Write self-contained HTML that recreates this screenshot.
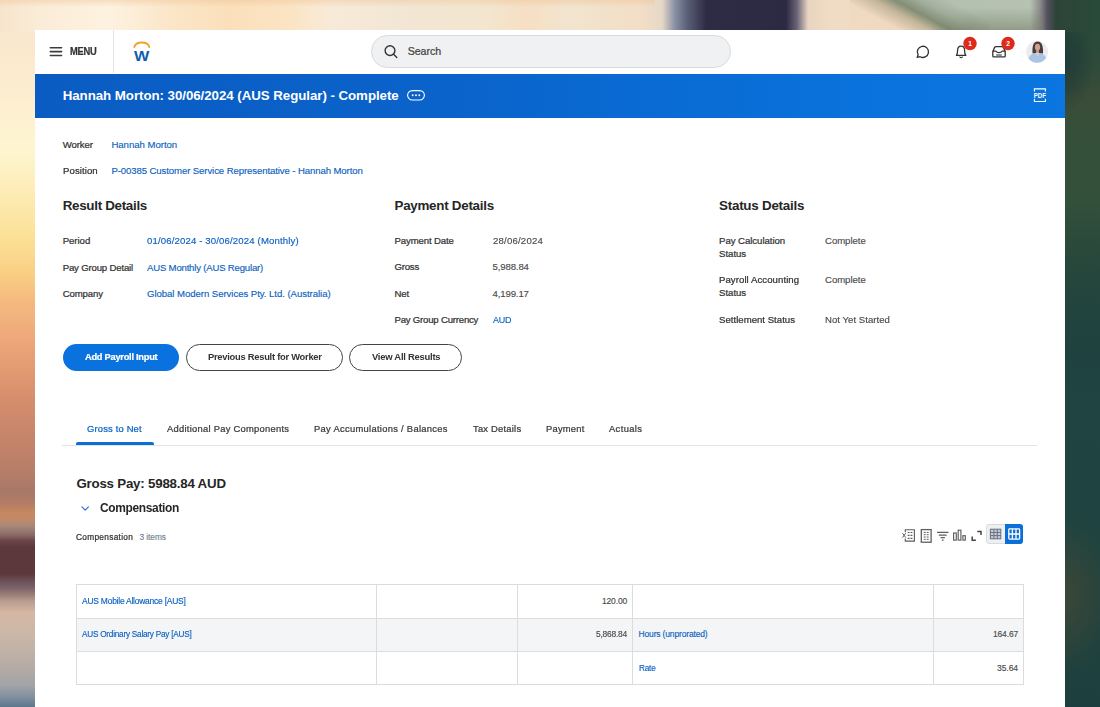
<!DOCTYPE html>
<html lang="en">
<head>
<meta charset="utf-8">
<title>Hannah Morton: 30/06/2024 (AUS Regular) - Complete</title>
<style>
html,body{margin:0;padding:0;}
body{width:1100px;height:707px;overflow:hidden;position:relative;background:#f6e4cc;font-family:"Liberation Sans",Arial,sans-serif;}
.abs{position:absolute;}
.t{position:absolute;white-space:nowrap;line-height:1;}
/* background photo approximation */
#bgleft{left:0;top:0;width:40px;height:707px;background:linear-gradient(to bottom,
 #f8e3cc 0px,#fdeed0 100px,#fef5d0 150px,#fdeab0 200px,#fbdf95 240px,#f9d084 272px,#f5bc80 298px,#efa97a 335px,#e49c72 365px,#d48e6c 400px,#c4846a 440px,#b87e68 470px,#a87868 490px,#b27c66 503px,#c8885e 513px,#c08a68 519px,#a88878 526px,#8a6a68 535px,#6a4448 541px,#5c383c 547px,#5c383c 574px,#6c5058 581px,#7a6468 588px,#9a8078 595px,#b89c90 601px,#d6b6a2 612px,#ccb8a8 630px,#c2b2a6 650px,#b4aaa4 668px,#a2a4a8 685px,#8090a0 697px,#5e768a 707px);}
#bgtop{left:0;top:0;width:1100px;height:32px;background:linear-gradient(to bottom,rgba(238,196,150,0.45) 0px,rgba(238,196,150,0) 7px) 0 0/655px 8px no-repeat,linear-gradient(to right,
 #f7e4cc 0px,#fbecd8 40px,#fdf2e0 110px,#fbe6c8 170px,#fbdfba 230px,#fbe4c4 290px,#f8ead8 330px,#f2e6d4 400px,#f3e6d0 480px,#f6dfc4 525px,#f1e4ce 570px,#f3dec6 640px,#e6d8c8 662px,#8890a4 675px,#5a6078 687px,#2e2c44 706px,#2c2a42 786px,#6a6478 797px,#e8d4c0 808px,#f0dcc4 830px,#f0dac2 880px,#b4c0b0 960px,#b6c2b2 1030px,#8c8c8c 1040px,#565260 1047px,#2c4438 1056px,#2a4a38 1100px);}
#bgdiag{left:850px;top:0;width:140px;height:34px;background:linear-gradient(28deg,#f0dac2 0%,#efd9c0 28%,#c4b69a 43%,#848e76 53%,#a4b09e 66%,#b4c0b0 80%,#b4c0b0 100%);}
#bgshade{left:930px;top:0;width:112px;height:34px;background:linear-gradient(to bottom,rgba(110,120,96,0) 8px,rgba(110,120,96,0.5) 30px);-webkit-mask-image:linear-gradient(to right,transparent 0,#000 40px,#000 100%);mask-image:linear-gradient(to right,transparent 0,#000 40px,#000 100%);}
#bgright{left:1060px;top:0;width:40px;height:707px;background:radial-gradient(ellipse 52px 80px at 2px 596px,rgba(66,72,54,0.85) 0%,rgba(62,72,54,0.45) 50%,rgba(60,72,56,0) 100%),radial-gradient(ellipse 32px 52px at 3px 60px,rgba(28,56,54,0.85) 0%,rgba(28,56,54,0.5) 50%,rgba(28,56,54,0) 100%),linear-gradient(to bottom,
 #2a4a38 0px,#2c4a3a 50px,#3a4c38 100px,#35503a 140px,#33503a 200px,#2c4a3a 240px,#26463c 270px,#22443e 310px,#1f4240 350px,#1f4442 400px,#1f4340 520px,#21423e 600px,#1e403e 680px,#1c3e3e 707px);}
#panel{left:35px;top:30px;width:1030px;height:677px;background:#fff;}
#banner{left:35px;top:73.5px;width:1030px;height:44.2px;background:linear-gradient(to right,#0a5cc2 0%,#0a63cb 40%,#0a72dc 80%,#0b75e0 100%);}
#vdiv{left:113px;top:30px;width:1px;height:43px;background:#e4e4e8;}
#search{left:370.5px;top:35.3px;width:360.6px;height:32.6px;box-sizing:border-box;border:1px solid #dadadc;border-radius:16.3px;background:#f0f1f2;}
.btn{box-sizing:border-box;height:27.5px;border-radius:14px;top:343.5px;}
#b1{left:62.5px;width:116.5px;background:#0a72de;}
#b2{left:185.6px;width:157px;border:1px solid #444;background:#fff;}
#b3{left:349.2px;width:113px;border:1px solid #444;background:#fff;}
#tabline{left:62px;top:445px;width:975px;height:1px;background:#e4e4e4;}
#tabul{left:76px;top:442px;width:77.7px;height:3px;background:#0b6fd8;border-radius:2px 2px 0 0;}
/* table */
#tbl{left:76px;top:584px;width:947.5px;height:101px;box-sizing:border-box;border:1px solid #dcdcdc;background:#fff;}
#row2{left:77px;top:618px;width:945.5px;height:33px;background:#f4f5f7;}
.hl{left:76px;width:947.5px;height:1px;background:#dcdcdc;}
.vl{top:584px;width:1px;height:101px;background:#dcdcdc;}
#tog{left:986px;top:524.3px;width:37.4px;height:19.3px;border-radius:3px;background:#eef0f2;box-sizing:border-box;border:1px solid #d8dadd;}
#togb{left:1005.2px;top:524.3px;width:18.2px;height:19.3px;border-radius:0 3px 3px 0;background:#0b6fd8;}
</style>
</head>
<body>
<div id="bgleft" class="abs"></div>
<div id="bgright" class="abs"></div>
<div id="bgtop" class="abs"></div>
<div id="bgdiag" class="abs"></div>
<div id="bgshade" class="abs"></div>
<div id="panel" class="abs"></div>
<div id="banner" class="abs"></div>
<div id="vdiv" class="abs"></div>
<div id="search" class="abs"></div>
<div id="b1" class="abs btn"></div>
<div id="b2" class="abs btn"></div>
<div id="b3" class="abs btn"></div>
<div id="tabline" class="abs"></div>
<div id="tabul" class="abs"></div>
<div id="tbl" class="abs"></div>
<div id="row2" class="abs"></div>
<div class="abs hl" style="top:617.5px"></div>
<div class="abs hl" style="top:651px"></div>
<div class="abs vl" style="left:376px"></div>
<div class="abs vl" style="left:517px"></div>
<div class="abs vl" style="left:632.3px"></div>
<div class="abs vl" style="left:933.4px"></div>
<div id="tog" class="abs"></div>
<div id="togb" class="abs"></div>

<svg class="abs" style="left:0;top:0" width="1100" height="707" viewBox="0 0 1100 707" fill="none">
 <!-- hamburger -->
 <g stroke="#3c3c3c" stroke-width="1.55" stroke-linecap="round">
  <path d="M50.3 47.7H61.6M50.3 51.6H61.6M50.3 55.5H61.6"/>
 </g>
 <!-- logo -->
 <path d="M134.3 47 C135.9 41.1 147.7 41.1 149.3 47" stroke="#f2a12a" stroke-width="1.9" stroke-linecap="round"/>
 <!-- search icon -->
 <circle cx="390" cy="50.6" r="4.9" stroke="#333" stroke-width="1.4"/>
 <path d="M393.6 54.2L396.8 57.4" stroke="#333" stroke-width="1.4" stroke-linecap="round"/>
 <!-- related actions pill -->
 <rect x="407.6" y="90.6" width="16.8" height="9.4" rx="4.7" stroke="#fff" stroke-width="1.1"/>
 <circle cx="412.7" cy="95.3" r="0.95" fill="#fff"/><circle cx="416" cy="95.3" r="0.95" fill="#fff"/><circle cx="419.3" cy="95.3" r="0.95" fill="#fff"/>
 <!-- chat -->
 <path d="M917.2 57.3 L918.1 54.7 A5.6 5.6 0 1 1 920.1 56.7 Z" stroke="#333" stroke-width="1.3" stroke-linejoin="round"/>
 <!-- bell -->
 <path d="M956.4 55.4 H965.8 C964.6 54.2 964.6 53 964.6 50.6 C964.6 47.8 963.2 46.2 961.1 46.2 C959 46.2 957.6 47.8 957.6 50.6 C957.6 53 957.6 54.2 956.4 55.4 Z" stroke="#333" stroke-width="1.3" stroke-linejoin="round"/>
 <path d="M959.6 56.6 A1.6 1.6 0 0 0 962.6 56.6" stroke="#333" stroke-width="1.2"/>
 <circle cx="970" cy="43.5" r="6.7" fill="#de2a1c"/>
 <!-- inbox -->
 <path d="M992.8 51.6 L994.6 47.4 Q995 46.6 996 46.6 H1002 Q1003 46.6 1003.4 47.4 L1005.2 51.6 V56 Q1005.2 56.9 1004.4 56.9 H993.6 Q992.8 56.9 992.8 56 Z" stroke="#333" stroke-width="1.3" stroke-linejoin="round"/>
 <path d="M992.8 51.1 H996 Q996.5 52.6 999 52.6 Q1001.5 52.6 1002 51.1 H1005.2" stroke="#333" stroke-width="1.1" stroke-linejoin="round"/>
 <path d="M996.2 55 H1001.8" stroke="#333" stroke-width="1.1"/>
 <circle cx="1008" cy="43.5" r="6.7" fill="#de2a1c"/>
 <!-- avatar -->
 <clipPath id="avc"><circle cx="1037.1" cy="51.8" r="10.9"/></clipPath>
 <g clip-path="url(#avc)">
  <rect x="1026" y="40" width="23" height="24" fill="#ececee"/>
  <path d="M1032.6 53.4 C1032.2 49 1032.2 41.6 1037.6 41.6 C1043 41.6 1043.2 49 1043 53.4 Z" fill="#4a3b3c"/>
  <ellipse cx="1037.5" cy="47.2" rx="2.6" ry="3.4" fill="#cda291"/>
  <path d="M1036.2 49.8 H1038.8 V53.4 H1036.2Z" fill="#c89c8a"/>
  <path d="M1027.6 63.5 C1027.8 55.5 1031.5 53 1037.4 53 C1043.3 53 1046.8 55.5 1047 63.5 Z" fill="#a9c4e4"/>
  <path d="M1035.6 52.8 L1037.5 56.4 L1039.4 52.8 Z" fill="#e4d0c8"/>
 </g>
 <!-- pdf icon -->
 <g stroke="#fff" stroke-width="1.1">
  <path d="M1034.4 91.6V88.9H1045.4V91.6M1034.4 98.8V101.5H1045.4V98.8"/>
 </g>
 <!-- chevron -->
 <path d="M82 506.9 L85.2 510.2 L88.4 506.9" stroke="#2a74d0" stroke-width="1.15" stroke-linecap="round" stroke-linejoin="round"/>
 <!-- toolbar icons -->
 <g stroke="#5e5e5e" stroke-width="1.15">
  <!-- excel -->
  <path d="M905.3 532.2V529.7H914.4V541.1H905.3V538.6"/>
  <path d="M907.7 532.5H912.5M907.7 535.4H912.5M907.7 538.3H912.5" stroke-dasharray="1.9 0.9"/>
  <path d="M902.5 533.2L905.7 537.6M905.7 533.2L902.5 537.6" stroke-width="1"/>
  <!-- doc -->
  <rect x="921.3" y="529.6" width="9.8" height="12.6" stroke-width="1.3"/>
  <path d="M923.7 532.4H928.7M923.7 534.7H928.7M923.7 537H928.7M923.7 539.3H928.7" stroke-dasharray="2 1" stroke-width="1"/>
  <!-- filter -->
  <path d="M937 532.4H948.5M938.8 535H946.7M940.6 537.6H944.9M941.9 540.2H943.6" stroke-width="1.25"/>
  <!-- bars -->
  <rect x="953.6" y="533" width="2.7" height="7.1"/>
  <rect x="958.2" y="530.2" width="2.7" height="9.9"/>
  <rect x="962.9" y="535.7" width="2.4" height="4.4"/>
  <!-- expand -->
  <path d="M977.3 531.4H981V535.1M972.2 536.5V540.2H975.9" stroke-width="1.5" stroke="#444"/>
 </g>
 <!-- toggle grids -->
 <g stroke="#667080" stroke-width="1">
  <rect x="990.4" y="529.2" width="10.4" height="9.6" fill="#c9ced4"/>
  <path d="M990.4 532.4H1000.8M990.4 535.6H1000.8M993.9 529.2V538.8M997.3 529.2V538.8"/>
 </g>
 <g stroke="#fff" stroke-width="1.3">
  <rect x="1008.8" y="528.9" width="10.8" height="10.2" rx="0.8" fill="#0b6fd8"/>
  <path d="M1008.8 534H1019.6M1012.4 528.9V539.1M1016 528.9V539.1"/>
 </g>
 <text x="141.7" y="61" text-anchor="middle" font-family="Liberation Sans, Arial, sans-serif" font-weight="700" font-size="15.4" fill="#0f5cb0" textLength="15.3" lengthAdjust="spacingAndGlyphs">W</text>
 <text x="970" y="45.9" text-anchor="middle" font-family="Liberation Sans, Arial, sans-serif" font-weight="700" font-size="6.6" fill="#fff">1</text>
 <text x="1008" y="45.9" text-anchor="middle" font-family="Liberation Sans, Arial, sans-serif" font-weight="700" font-size="6.6" fill="#fff">2</text>
 <text x="1039.9" y="97.7" text-anchor="middle" font-family="Liberation Sans, Arial, sans-serif" font-weight="700" font-size="7.2" fill="#fff" textLength="12.2" lengthAdjust="spacingAndGlyphs">PDF</text>
</svg>

<span class="t" style="left:69.5px;top:46.87px;font-size:10.2px;font-weight:700;color:#333;letter-spacing:-0.286px;-webkit-text-stroke:0.22px currentColor;transform:scaleX(0.9183);transform-origin:0 0;">MENU</span>
<span class="t" style="left:407.7px;top:46.43px;font-size:10.6px;font-weight:400;color:#444;-webkit-text-stroke:0.24px currentColor;letter-spacing:-0.013px;transform:scaleX(1.0000);transform-origin:0 0;">Search</span>
<span class="t" style="left:62.7px;top:89.14px;font-size:13.3px;font-weight:700;color:#fff;letter-spacing:-0.048px;transform:scaleX(1.0000);transform-origin:0 0;">Hannah Morton: 30/06/2024 (AUS Regular) - Complete</span>
<span class="t" style="left:62.7px;top:139.77px;font-size:9.6px;font-weight:400;color:#333333;-webkit-text-stroke:0.24px currentColor;letter-spacing:-0.092px;transform:scaleX(1.0000);transform-origin:0 0;">Worker</span>
<span class="t" style="left:111.4px;top:139.77px;font-size:9.6px;font-weight:400;color:#0b5fc0;-webkit-text-stroke:0.14px currentColor;letter-spacing:-0.026px;transform:scaleX(1.0000);transform-origin:0 0;">Hannah Morton</span>
<span class="t" style="left:62.7px;top:166.47px;font-size:9.6px;font-weight:400;color:#333333;-webkit-text-stroke:0.24px currentColor;letter-spacing:0.082px;transform:scaleX(0.9999);transform-origin:0 0;">Position</span>
<span class="t" style="left:111.4px;top:166.47px;font-size:9.6px;font-weight:400;color:#0b5fc0;-webkit-text-stroke:0.14px currentColor;letter-spacing:-0.104px;transform:scaleX(1.0000);transform-origin:0 0;">P-00385 Customer Service Representative - Hannah Morton</span>
<span class="t" style="left:62.7px;top:198.66px;font-size:13.4px;font-weight:700;color:#262626;letter-spacing:-0.304px;transform:scaleX(1.0000);transform-origin:0 0;">Result Details</span>
<span class="t" style="left:394.5px;top:198.66px;font-size:13.4px;font-weight:700;color:#262626;letter-spacing:-0.277px;transform:scaleX(1.0000);transform-origin:0 0;">Payment Details</span>
<span class="t" style="left:719.1px;top:198.66px;font-size:13.4px;font-weight:700;color:#262626;letter-spacing:-0.254px;transform:scaleX(1.0000);transform-origin:0 0;">Status Details</span>
<span class="t" style="left:62.7px;top:236.07px;font-size:9.6px;font-weight:400;color:#333333;-webkit-text-stroke:0.24px currentColor;letter-spacing:-0.039px;transform:scaleX(1.0000);transform-origin:0 0;">Period</span>
<span class="t" style="left:147.0px;top:236.07px;font-size:9.6px;font-weight:400;color:#0b5fc0;-webkit-text-stroke:0.14px currentColor;letter-spacing:0.139px;transform:scaleX(0.9999);transform-origin:0 0;">01/06/2024 - 30/06/2024 (Monthly)</span>
<span class="t" style="left:62.7px;top:262.57px;font-size:9.6px;font-weight:400;color:#333333;-webkit-text-stroke:0.24px currentColor;letter-spacing:-0.173px;transform:scaleX(1.0000);transform-origin:0 0;">Pay Group Detail</span>
<span class="t" style="left:147.0px;top:262.57px;font-size:9.6px;font-weight:400;color:#0b5fc0;-webkit-text-stroke:0.14px currentColor;letter-spacing:-0.201px;transform:scaleX(1.0000);transform-origin:0 0;">AUS Monthly (AUS Regular)</span>
<span class="t" style="left:62.7px;top:289.27px;font-size:9.6px;font-weight:400;color:#333333;-webkit-text-stroke:0.24px currentColor;letter-spacing:-0.109px;transform:scaleX(1.0000);transform-origin:0 0;">Company</span>
<span class="t" style="left:147.0px;top:289.27px;font-size:9.6px;font-weight:400;color:#0b5fc0;-webkit-text-stroke:0.14px currentColor;letter-spacing:-0.053px;transform:scaleX(1.0000);transform-origin:0 0;">Global Modern Services Pty. Ltd. (Australia)</span>
<span class="t" style="left:394.5px;top:235.87px;font-size:9.6px;font-weight:400;color:#333333;-webkit-text-stroke:0.24px currentColor;letter-spacing:-0.133px;transform:scaleX(1.0000);transform-origin:0 0;">Payment Date</span>
<span class="t" style="left:492.5px;top:235.87px;font-size:9.6px;font-weight:400;color:#4a4a4a;-webkit-text-stroke:0.14px currentColor;letter-spacing:0.198px;transform:scaleX(0.9999);transform-origin:0 0;">28/06/2024</span>
<span class="t" style="left:394.5px;top:262.47px;font-size:9.6px;font-weight:400;color:#333333;-webkit-text-stroke:0.24px currentColor;letter-spacing:-0.219px;transform:scaleX(1.0000);transform-origin:0 0;">Gross</span>
<span class="t" style="left:492.5px;top:262.47px;font-size:9.6px;font-weight:400;color:#4a4a4a;-webkit-text-stroke:0.14px currentColor;letter-spacing:-0.132px;transform:scaleX(1.0000);transform-origin:0 0;">5,988.84</span>
<span class="t" style="left:394.5px;top:289.07px;font-size:9.6px;font-weight:400;color:#333333;-webkit-text-stroke:0.24px currentColor;letter-spacing:-0.113px;transform:scaleX(1.0000);transform-origin:0 0;">Net</span>
<span class="t" style="left:492.5px;top:289.07px;font-size:9.6px;font-weight:400;color:#4a4a4a;-webkit-text-stroke:0.14px currentColor;letter-spacing:-0.132px;transform:scaleX(1.0000);transform-origin:0 0;">4,199.17</span>
<span class="t" style="left:394.5px;top:315.47px;font-size:9.6px;font-weight:400;color:#333333;-webkit-text-stroke:0.24px currentColor;letter-spacing:-0.209px;transform:scaleX(1.0000);transform-origin:0 0;">Pay Group Currency</span>
<span class="t" style="left:492.5px;top:315.47px;font-size:9.6px;font-weight:400;color:#0b5fc0;-webkit-text-stroke:0.14px currentColor;letter-spacing:-0.269px;transform:scaleX(0.9353);transform-origin:0 0;">AUD</span>
<span class="t" style="left:719.1px;top:235.87px;font-size:9.6px;font-weight:400;color:#333333;-webkit-text-stroke:0.24px currentColor;letter-spacing:-0.045px;transform:scaleX(1.0000);transform-origin:0 0;">Pay Calculation</span>
<span class="t" style="left:719.1px;top:248.87px;font-size:9.6px;font-weight:400;color:#333333;-webkit-text-stroke:0.24px currentColor;letter-spacing:-0.034px;transform:scaleX(1.0000);transform-origin:0 0;">Status</span>
<span class="t" style="left:825.0px;top:235.87px;font-size:9.6px;font-weight:400;color:#4a4a4a;-webkit-text-stroke:0.14px currentColor;letter-spacing:-0.045px;transform:scaleX(1.0000);transform-origin:0 0;">Complete</span>
<span class="t" style="left:719.1px;top:275.37px;font-size:9.6px;font-weight:400;color:#333333;-webkit-text-stroke:0.24px currentColor;letter-spacing:0.070px;transform:scaleX(0.9999);transform-origin:0 0;">Payroll Accounting</span>
<span class="t" style="left:719.1px;top:288.27px;font-size:9.6px;font-weight:400;color:#333333;-webkit-text-stroke:0.24px currentColor;letter-spacing:-0.034px;transform:scaleX(1.0000);transform-origin:0 0;">Status</span>
<span class="t" style="left:825.0px;top:275.37px;font-size:9.6px;font-weight:400;color:#4a4a4a;-webkit-text-stroke:0.14px currentColor;letter-spacing:-0.045px;transform:scaleX(1.0000);transform-origin:0 0;">Complete</span>
<span class="t" style="left:719.1px;top:314.67px;font-size:9.6px;font-weight:400;color:#333333;-webkit-text-stroke:0.24px currentColor;letter-spacing:0.016px;transform:scaleX(0.9999);transform-origin:0 0;">Settlement Status</span>
<span class="t" style="left:825.0px;top:314.67px;font-size:9.6px;font-weight:400;color:#4a4a4a;-webkit-text-stroke:0.14px currentColor;letter-spacing:0.030px;transform:scaleX(0.9999);transform-origin:0 0;">Not Yet Started</span>
<span class="t" style="left:84.9px;top:352.37px;font-size:9.6px;font-weight:700;color:#fff;letter-spacing:-0.269px;-webkit-text-stroke:0.22px currentColor;transform:scaleX(0.9672);transform-origin:0 0;">Add Payroll Input</span>
<span class="t" style="left:207.7px;top:352.37px;font-size:9.6px;font-weight:700;color:#333;letter-spacing:-0.269px;transform:scaleX(0.9757);transform-origin:0 0;">Previous Result for Worker</span>
<span class="t" style="left:371.7px;top:352.37px;font-size:9.6px;font-weight:700;color:#333;letter-spacing:-0.269px;transform:scaleX(0.9857);transform-origin:0 0;">View All Results</span>
<span class="t" style="left:87.4px;top:423.54px;font-size:9.4px;font-weight:400;color:#0b63c5;-webkit-text-stroke:0.24px currentColor;letter-spacing:0.181px;transform:scaleX(0.9999);transform-origin:0 0;">Gross to Net</span>
<span class="t" style="left:166.7px;top:423.54px;font-size:9.4px;font-weight:400;color:#3a3a3a;-webkit-text-stroke:0.24px currentColor;letter-spacing:0.264px;transform:scaleX(0.9999);transform-origin:0 0;">Additional Pay Components</span>
<span class="t" style="left:314.0px;top:423.54px;font-size:9.4px;font-weight:400;color:#3a3a3a;-webkit-text-stroke:0.24px currentColor;letter-spacing:0.293px;transform:scaleX(0.9999);transform-origin:0 0;">Pay Accumulations / Balances</span>
<span class="t" style="left:472.7px;top:423.54px;font-size:9.4px;font-weight:400;color:#3a3a3a;-webkit-text-stroke:0.24px currentColor;letter-spacing:0.222px;transform:scaleX(0.9999);transform-origin:0 0;">Tax Details</span>
<span class="t" style="left:545.8px;top:423.54px;font-size:9.4px;font-weight:400;color:#3a3a3a;-webkit-text-stroke:0.24px currentColor;letter-spacing:0.214px;transform:scaleX(0.9999);transform-origin:0 0;">Payment</span>
<span class="t" style="left:608.8px;top:423.54px;font-size:9.4px;font-weight:400;color:#3a3a3a;-webkit-text-stroke:0.24px currentColor;letter-spacing:0.364px;transform:scaleX(0.9999);transform-origin:0 0;">Actuals</span>
<span class="t" style="left:76.4px;top:476.54px;font-size:13.3px;font-weight:700;color:#262626;letter-spacing:-0.208px;transform:scaleX(1.0000);transform-origin:0 0;">Gross Pay: 5988.84 AUD</span>
<span class="t" style="left:100.4px;top:502.34px;font-size:12.0px;font-weight:700;color:#262626;letter-spacing:-0.336px;transform:scaleX(0.9961);transform-origin:0 0;">Compensation</span>
<span class="t" style="left:76.4px;top:532.77px;font-size:8.3px;font-weight:400;color:#333333;-webkit-text-stroke:0.24px currentColor;letter-spacing:0.307px;transform:scaleX(0.9999);transform-origin:0 0;">Compensation</span>
<span class="t" style="left:139.6px;top:532.77px;font-size:8.3px;font-weight:400;color:#6f7f8f;-webkit-text-stroke:0.14px currentColor;letter-spacing:-0.079px;transform:scaleX(1.0000);transform-origin:0 0;">3 items</span>
<span class="t" style="left:82.3px;top:596.80px;font-size:8.5px;font-weight:400;color:#0b5fc0;-webkit-text-stroke:0.14px currentColor;letter-spacing:-0.238px;transform:scaleX(0.9972);transform-origin:0 0;">AUS Mobile Allowance [AUS]</span>
<span class="t" style="left:602.0px;top:596.80px;font-size:8.5px;font-weight:400;color:#4a4a4a;-webkit-text-stroke:0.14px currentColor;letter-spacing:-0.167px;transform:scaleX(1.0000);transform-origin:0 0;">120.00</span>
<span class="t" style="left:82.3px;top:630.30px;font-size:8.5px;font-weight:400;color:#0b5fc0;-webkit-text-stroke:0.14px currentColor;letter-spacing:-0.238px;transform:scaleX(0.9642);transform-origin:0 0;">AUS Ordinary Salary Pay [AUS]</span>
<span class="t" style="left:596.0px;top:630.30px;font-size:8.5px;font-weight:400;color:#4a4a4a;-webkit-text-stroke:0.14px currentColor;letter-spacing:-0.238px;transform:scaleX(0.9939);transform-origin:0 0;">5,868.84</span>
<span class="t" style="left:638.5px;top:630.30px;font-size:8.5px;font-weight:400;color:#0b5fc0;-webkit-text-stroke:0.14px currentColor;letter-spacing:-0.156px;transform:scaleX(1.0000);transform-origin:0 0;">Hours (unprorated)</span>
<span class="t" style="left:993.0px;top:630.30px;font-size:8.5px;font-weight:400;color:#4a4a4a;-webkit-text-stroke:0.14px currentColor;letter-spacing:-0.167px;transform:scaleX(1.0000);transform-origin:0 0;">164.67</span>
<span class="t" style="left:638.5px;top:663.50px;font-size:8.5px;font-weight:400;color:#0b5fc0;-webkit-text-stroke:0.14px currentColor;letter-spacing:-0.238px;transform:scaleX(0.9696);transform-origin:0 0;">Rate</span>
<span class="t" style="left:997.0px;top:663.50px;font-size:8.5px;font-weight:400;color:#4a4a4a;-webkit-text-stroke:0.14px currentColor;letter-spacing:-0.056px;transform:scaleX(1.0000);transform-origin:0 0;">35.64</span>
</body>
</html>
